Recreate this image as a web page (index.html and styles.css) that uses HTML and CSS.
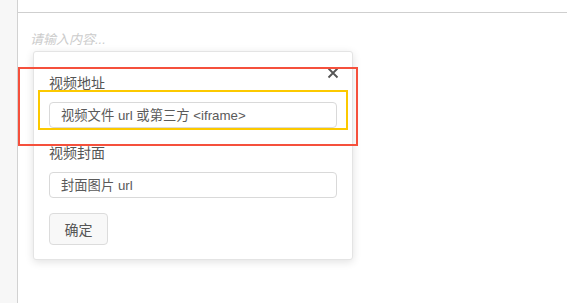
FILE: index.html
```html
<!DOCTYPE html>
<html lang="zh">
<head>
<meta charset="utf-8">
<link rel="stylesheet" href="styles.css">
</head>
<body>
<div class="page">
  <div class="side"></div>
  <div class="main">
    <div class="toolbar"></div>
    <div class="editor">
      <div class="placeholder">请输入内容...</div>
    </div>
  </div>
</div>

<div class="popup">
  <button class="close" aria-label="关闭">
    <svg width="12" height="12" viewBox="0 0 12 12"><path d="M1.5 1.5 L10.5 10.5 M10.5 1.5 L1.5 10.5" stroke="#555" stroke-width="1.8" fill="none"/></svg>
  </button>
  <div class="label">视频地址</div>
  <input class="field" type="text" placeholder="视频文件 url 或第三方 <iframe>">
  <div class="label label-second">视频封面</div>
  <input class="field" type="text" placeholder="封面图片 url">
  <button class="ok">确定</button>
</div>

<div class="mark mark-red"></div>
<div class="mark mark-yellow"></div>
</body>
</html>
```

FILE: styles.css
```css
* { box-sizing: border-box; }
html, body { margin: 0; padding: 0; height: 100%; }
body {
  font-family: "Liberation Sans", "Noto Sans CJK SC", sans-serif;
  background: #fff;
  color: #555;
  position: relative;
  overflow: hidden;
}
.page {
  display: flex;
  height: 303px;
}
.side {
  width: 18px;
  background: #f7f7f7;
  border-right: 1px solid #d2d2d2;
}
.main {
  flex: 1;
  display: flex;
  flex-direction: column;
}
.toolbar {
  height: 13px;
  border-bottom: 1px solid #cfcfcf;
}
.editor {
  padding: 19px 0 0 12px;
}
.placeholder {
  font-size: 13px;
  line-height: 16px;
  font-style: italic;
  color: #ccc;
}
.popup {
  position: absolute;
  left: 33px;
  top: 51px;
  width: 320px;
  height: 209px;
  background: #fff;
  border: 1px solid #e4e4e4;
  border-radius: 3px;
  box-shadow: 0 2px 8px rgba(0,0,0,0.12);
  padding: 21px 15px 0 15px;
  display: flex;
  flex-direction: column;
  align-items: flex-start;
}
.close {
  position: absolute;
  right: 12px;
  top: 14px;
  width: 14px;
  height: 14px;
  padding: 1px;
  border: 0;
  background: none;
  display: flex;
  align-items: center;
  justify-content: center;
}
.label {
  font-size: 14px;
  line-height: 20px;
  color: #555;
}
.label-second { margin-top: 15px; }
.field {
  margin-top: 9px;
  width: 288px;
  height: 26px;
  border: 1px solid #d9d9d9;
  border-radius: 4px;
  padding: 0 11px;
  font-family: "Liberation Sans", "Noto Sans CJK SC", sans-serif;
  font-size: 13.3px;
  color: #555;
  background: #fff;
  outline: none;
}
.field::placeholder { color: #5a5a5a; opacity: 1; }
.ok {
  margin-top: 15px;
  width: 59px;
  height: 32px;
  border: 1px solid #dcdcdc;
  border-radius: 4px;
  background: #f8f8f8;
  font-family: "Liberation Sans", "Noto Sans CJK SC", sans-serif;
  font-size: 14px;
  color: #555;
  padding: 0;
}
.mark {
  position: absolute;
  pointer-events: none;
}
.mark-red {
  left: 18px;
  top: 67px;
  width: 340px;
  height: 79px;
  border: 2px solid #f5503c;
}
.mark-yellow {
  left: 38px;
  top: 90px;
  width: 310px;
  height: 40px;
  border: 2px solid #fcc900;
}
```
